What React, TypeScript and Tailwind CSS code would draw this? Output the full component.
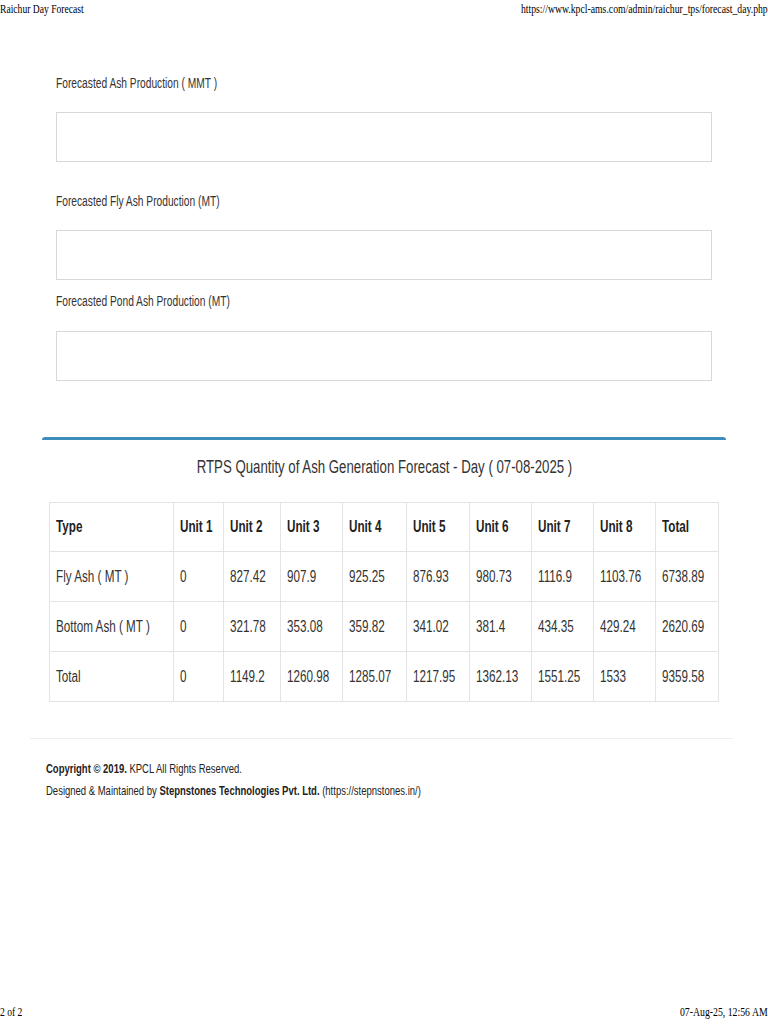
import React from 'react';

// the printed page is squeezed horizontally, so text is narrowed with scale-x
const Sq: React.FC<{ children: React.ReactNode; className?: string }> = ({ children, className = '' }) => (
    <span className={`inline-block whitespace-nowrap scale-x-[0.73] origin-left ${className}`}>{children}</span>
);

const rows = [
    { type: 'Fly Ash ( MT )', values: ['0', '827.42', '907.9', '925.25', '876.93', '980.73', '1116.9', '1103.76', '6738.89'] },
    { type: 'Bottom Ash ( MT )', values: ['0', '321.78', '353.08', '359.82', '341.02', '381.4', '434.35', '429.24', '2620.69'] },
    { type: 'Total', values: ['0', '1149.2', '1260.98', '1285.07', '1217.95', '1362.13', '1551.25', '1533', '9359.58'] },
];

const headers = ['Type', 'Unit 1', 'Unit 2', 'Unit 3', 'Unit 4', 'Unit 5', 'Unit 6', 'Unit 7', 'Unit 8', 'Total'];
const colWidths = ['w-[124px]', 'w-[50px]', 'w-[57px]', 'w-[62px]', 'w-[64px]', 'w-[63px]', 'w-[62px]', 'w-[62px]', 'w-[62px]', 'w-[63px]'];

const fields = [
    { label: 'Forecasted Ash Production ( MMT )', top: 'pt-[54px]', gap: 'mb-[20px]' },
    { label: 'Forecasted Fly Ash Production (MT)', top: 'pt-[30px]', gap: 'mb-[20px]' },
    { label: 'Forecasted Pond Ash Production (MT)', top: 'pt-[12px]', gap: 'mb-[21px]' },
];

const App: React.FC = () => {
    return (
        <div className="w-[768px] h-[1024px] bg-white flex flex-col text-[#333] font-['Liberation_Sans',Arial,sans-serif]">
            {/* print header */}
            <div className="flex justify-between items-start h-[20px] pt-[1px] text-[12px] leading-[16px] text-black font-['Liberation_Serif','Times_New_Roman',serif]">
                <span className="inline-block whitespace-nowrap scale-x-[0.8] origin-left">Raichur Day Forecast</span>
                <span className="inline-block whitespace-nowrap scale-x-[0.81] origin-right">https://www.kpcl-ams.com/admin/raichur_tps/forecast_day.php</span>
            </div>

            <div className="flex flex-col px-[56px]">
                {fields.map((f) => (
                    <div key={f.label} className={f.top}>
                        <label className={`block text-[14px] leading-[18px] ${f.gap}`}>
                            <Sq>{f.label}</Sq>
                        </label>
                        <div className="h-[50px] w-[656px] border border-[#d7d7d7] bg-white"></div>
                    </div>
                ))}
            </div>

            {/* forecast box */}
            <div className="mt-[56px] mx-[42px] w-[684px] border-t-[3px] border-[#3c8dbc] rounded-t-[3px] flex flex-col">
                <h3 className="text-center text-[18px] leading-[24px] mt-[15px] mb-[23px] text-[#333]">
                    <span className="inline-block whitespace-nowrap scale-x-[0.735] origin-center">
                        RTPS Quantity of Ash Generation Forecast - Day ( 07-08-2025 )
                    </span>
                </h3>
                <div className="px-[7px]">
                    <table className="table-fixed w-[669px] border-collapse border border-[#e3e3e3] text-[16px]">
                        <thead>
                            <tr className="h-[49px]">
                                {headers.map((h, i) => (
                                    <th key={h} className={`${colWidths[i]} border border-[#e3e3e3] text-left font-bold px-[6px] align-middle text-[#222]`}>
                                        <Sq>{h}</Sq>
                                    </th>
                                ))}
                            </tr>
                        </thead>
                        <tbody>
                            {rows.map((r) => (
                                <tr key={r.type} className="h-[50px]">
                                    <td className="border border-[#e3e3e3] px-[6px]"><Sq>{r.type}</Sq></td>
                                    {r.values.map((v, i) => (
                                        <td key={i} className="border border-[#e3e3e3] px-[6px]"><Sq>{v}</Sq></td>
                                    ))}
                                </tr>
                            ))}
                        </tbody>
                    </table>
                </div>
            </div>

            {/* footer */}
            <div className="mt-[36px] ml-[30px] mr-[35px] border-t border-[#eeeeee] pt-[19px] px-[16px] text-[13px] leading-[22px] text-[#222]">
                <div><Sq><b>Copyright © 2019.</b> KPCL All Rights Reserved.</Sq></div>
                <div><Sq>Designed &amp; Maintained by <b>Stepnstones Technologies Pvt. Ltd.</b> (https://stepnstones.in/)</Sq></div>
            </div>

            <div className="mt-auto flex justify-between h-[20px] text-[12px] leading-[16px] text-black font-['Liberation_Serif','Times_New_Roman',serif]">
                <span className="inline-block whitespace-nowrap scale-x-[0.8] origin-left">2 of 2</span>
                <span className="inline-block whitespace-nowrap scale-x-[0.815] origin-right">07-Aug-25, 12:56 AM</span>
            </div>
        </div>
    );
};

export default App;
